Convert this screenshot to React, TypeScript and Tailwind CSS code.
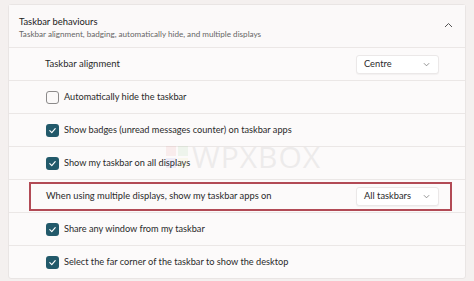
import React from "react";

const font = { fontFamily: 'Lato, "Open Sans", sans-serif' };

function Check({ checked }: { checked: boolean }) {
  if (!checked)
    return <div className="w-[13px] h-[13px] rounded-[3px] border border-[#8c8a8a] bg-[#fbf9f9]" />;
  return (
    <div className="w-[13px] h-[13px] rounded-[3px] bg-[#22596a] flex items-center justify-center">
      <svg width="9" height="9" viewBox="0 0 10 10" fill="none">
        <path d="M2 5.2 L4.2 7.3 L8 3" stroke="white" strokeWidth="1.3" strokeLinecap="round" strokeLinejoin="round" />
      </svg>
    </div>
  );
}

function Dropdown({ label }: { label: string }) {
  return (
    <div className="w-[83px] h-[19px] bg-white rounded-[3px] border border-[#ebe8e8] shadow-[0_1px_1px_rgba(0,0,0,0.04)] flex items-center justify-between pl-[7px] pr-[8px] text-[9.3px] text-[#2a2a2a]">
      <span>{label}</span>
      <svg width="7" height="5" viewBox="0 0 8 5" fill="none">
        <path d="M1 1 L4 4 L7 1" stroke="#777" strokeWidth="0.9" />
      </svg>
    </div>
  );
}

function CheckRow({ checked, text }: { checked: boolean; text: string }) {
  return (
    <div className="h-[33px] border-t border-[#ebe7e6] flex items-center pl-[37px] gap-[5px] text-[9.2px] text-[#2a2a2a]">
      <Check checked={checked} />
      <span>{text}</span>
    </div>
  );
}

export default function App() {
  return (
    <div className="w-[474px] h-[281px] bg-[#f4f0ef] pt-[4px] pl-[8px] overflow-hidden relative" style={font}>
      <div className="w-[458px] border border-[#e9e5e4] rounded-[3px] bg-[#fcfafa]">
        <div className="h-[42px] flex items-center justify-between pl-[10px] pr-[12px] bg-[#fbf9f9]">
          <div className="flex flex-col pt-[2px]">
            <span className="text-[9.4px] text-[#222] leading-[13px]">Taskbar behaviours</span>
            <span className="text-[8.1px] text-[#666] leading-[12px]">Taskbar alignment, badging, automatically hide, and multiple displays</span>
          </div>
          <svg width="9" height="6" viewBox="0 0 9 6" fill="none" className="mt-[-2px]">
            <path d="M1 5 L4.5 1.5 L8 5" stroke="#555" strokeWidth="1" />
          </svg>
        </div>
        <div className="h-[33px] border-t border-[#ebe7e6] flex items-center justify-between pl-[36px] pr-[26px] text-[9.5px] text-[#2a2a2a]">
          <span>Taskbar alignment</span>
          <Dropdown label="Centre" />
        </div>
        <CheckRow checked={false} text="Automatically hide the taskbar" />
        <CheckRow checked={true} text="Show badges (unread messages counter) on taskbar apps" />
        <CheckRow checked={true} text="Show my taskbar on all displays" />
        <div className="h-[33px] border-t border-[#ebe7e6] flex items-center pl-[20px] pr-[13px]">
          <div className="flex-1 h-[29px] border-2 border-[#b24a55] flex items-center justify-between pl-[15px] pr-[11px] text-[9.3px] text-[#2a2a2a]">
            <span>When using multiple displays, show my taskbar apps on</span>
            <Dropdown label="All taskbars" />
          </div>
        </div>
        <CheckRow checked={true} text="Share any window from my taskbar" />
        <CheckRow checked={true} text="Select the far corner of the taskbar to show the desktop" />
      </div>
      <div className="absolute left-[166px] top-[134px] flex items-center gap-[4px] opacity-[0.07] pointer-events-none">
        <div className="grid grid-cols-2 gap-[2px]">
          <div className="w-[10px] h-[10px] bg-[#d44]" />
          <div className="w-[10px] h-[10px] bg-[#4a4]" />
          <div className="w-[10px] h-[10px] bg-[#44d]" />
          <div className="w-[10px] h-[10px] bg-[#dd4]" />
        </div>
        <span className="text-[30px] text-[#333] tracking-[1px]" style={{ fontFamily: '"Open Sans", sans-serif' }}>WPXBOX</span>
      </div>
    </div>
  );
}
